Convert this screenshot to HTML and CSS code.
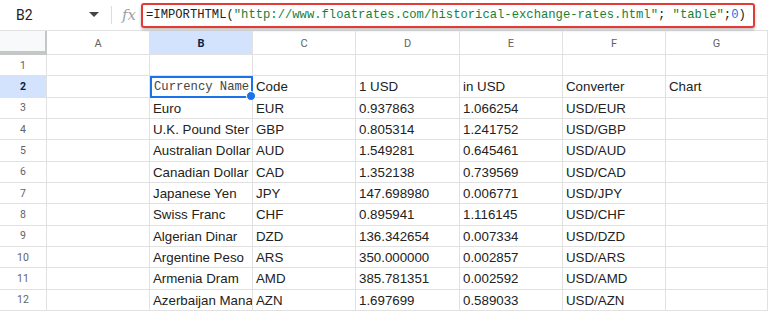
FILE: index.html
```html
<!DOCTYPE html>
<html>
<head>
    <title>IMPORTHTML sheet</title>
    <meta charset="utf-8" />
    <link rel="stylesheet" href="styles.css">
</head>
<body>
    <!-- FORMULA BAR -->
    <div class="toolbar">
        <div class="namebox">B2</div>
        <svg class="caret" width="10" height="6" viewBox="0 0 10 6"><path d="M0 0 L10 0 L5 5 Z" fill="#444"/></svg>
        <div class="divider"></div>
        <div class="fx">fx</div>
        <div class="formula"><span>=IMPORTHTML(</span><span class="str">"http://www.floatrates.com/historical-exchange-rates.html"</span><span>; </span><span class="str">"table"</span><span>;</span><span class="num">0</span><span>)</span></div>
    </div>

    <!-- GRID -->
    <div class="sheet">
        <div class="hd corner"></div>
        <div class="hd">A</div>
        <div class="hd sel">B</div>
        <div class="hd">C</div>
        <div class="hd">D</div>
        <div class="hd">E</div>
        <div class="hd">F</div>
        <div class="hd">G</div>

        <div class="rn">1</div>
        <div class="c"></div><div class="c"></div><div class="c"></div><div class="c"></div><div class="c"></div><div class="c"></div><div class="c"></div>

        <div class="rn sel">2</div>
        <div class="c"></div>
        <div class="c active">Currency Name<span class="handle"></span></div>
        <div class="c">Code</div><div class="c">1 USD</div><div class="c">in USD</div><div class="c">Converter</div><div class="c">Chart</div>

        <div class="rn">3</div>
        <div class="c"></div><div class="c">Euro</div><div class="c">EUR</div><div class="c">0.937863</div><div class="c">1.066254</div><div class="c">USD/EUR</div><div class="c"></div>

        <div class="rn">4</div>
        <div class="c"></div><div class="c">U.K. Pound Ster</div><div class="c">GBP</div><div class="c">0.805314</div><div class="c">1.241752</div><div class="c">USD/GBP</div><div class="c"></div>

        <div class="rn">5</div>
        <div class="c"></div><div class="c">Australian Dollar</div><div class="c">AUD</div><div class="c">1.549281</div><div class="c">0.645461</div><div class="c">USD/AUD</div><div class="c"></div>

        <div class="rn">6</div>
        <div class="c"></div><div class="c">Canadian Dollar</div><div class="c">CAD</div><div class="c">1.352138</div><div class="c">0.739569</div><div class="c">USD/CAD</div><div class="c"></div>

        <div class="rn">7</div>
        <div class="c"></div><div class="c">Japanese Yen</div><div class="c">JPY</div><div class="c">147.698980</div><div class="c">0.006771</div><div class="c">USD/JPY</div><div class="c"></div>

        <div class="rn">8</div>
        <div class="c"></div><div class="c">Swiss Franc</div><div class="c">CHF</div><div class="c">0.895941</div><div class="c">1.116145</div><div class="c">USD/CHF</div><div class="c"></div>

        <div class="rn">9</div>
        <div class="c"></div><div class="c">Algerian Dinar</div><div class="c">DZD</div><div class="c">136.342654</div><div class="c">0.007334</div><div class="c">USD/DZD</div><div class="c"></div>

        <div class="rn">10</div>
        <div class="c"></div><div class="c">Argentine Peso</div><div class="c">ARS</div><div class="c">350.000000</div><div class="c">0.002857</div><div class="c">USD/ARS</div><div class="c"></div>

        <div class="rn">11</div>
        <div class="c"></div><div class="c">Armenia Dram</div><div class="c">AMD</div><div class="c">385.781351</div><div class="c">0.002592</div><div class="c">USD/AMD</div><div class="c"></div>

        <div class="rn">12</div>
        <div class="c"></div><div class="c">Azerbaijan Mana</div><div class="c">AZN</div><div class="c">1.697699</div><div class="c">0.589033</div><div class="c">USD/AZN</div><div class="c"></div>
    </div>
</body>
</html>
```

FILE: styles.css
```css
html, body {
    margin:0;
    padding:0;
    background:#fff;
    font-family:"Liberation Sans", Arial, sans-serif;
    overflow:hidden;
}

/*** formula bar ***/
.toolbar {
    display:flex;
    align-items:center;
    height:30px;
    border-bottom:1px solid #e1e1e1;
}
.namebox {
    width:68px;
    padding-left:16px;
    font-family:Roboto, "Liberation Sans", sans-serif;
    font-size:14px;
    color:#202124;
}
.caret { margin-left:5px; }
.divider {
    width:1px;
    height:18px;
    margin-left:12px;
    background:#dadce0;
}
.fx {
    width:19px;
    margin-left:10px;
    font-family:"DejaVu Serif", serif;
    font-style:italic;
    font-size:15px;
    color:#9aa0a6;
}
.formula {
    height:21px;
    width:607px;
    padding-left:3px;
    display:flex;
    align-items:center;
    border:2px solid #e53935;
    border-radius:3px;
    box-shadow:0 2px 3px rgba(0,0,0,0.25);
    font-family:"Liberation Mono", "DejaVu Sans Mono", monospace;
    font-size:12.2px;
    color:#222;
    white-space:pre;
}
.formula .str { color:#188038; }
.formula .num { color:#1a73e8; }

/*** sheet grid ***/
.sheet {
    display:grid;
    grid-template-columns:47px 103px 103px 103px 104px 103px 103px 1fr;
    grid-template-rows:24px;
    grid-auto-rows:21.33px;
}
.sheet > div {
    box-sizing:border-box;
    border-right:1px solid #e1e1e1;
    border-bottom:1px solid #e1e1e1;
    white-space:nowrap;
    overflow:hidden;
}
.hd {
    display:flex;
    align-items:center;
    justify-content:center;
    padding-top:2px;
    font-family:Roboto, "Liberation Sans", sans-serif;
    font-size:11px;
    color:#5f6368;
}
.sheet .corner {
    background:#f8f9fa;
    border-right:2px solid #c4c7c5;
    border-bottom:4px solid #c4c7c5;
}
.rn {
    display:flex;
    align-items:center;
    justify-content:center;
    font-family:Roboto, "Liberation Sans", sans-serif;
    font-size:10.5px;
    color:#5f6368;
}
.sheet .sel {
    background:#d3e3fd;
    color:#0b1f44;
    font-weight:bold;
}
.c {
    display:flex;
    align-items:center;
    padding-left:3px;
    padding-top:1px;
    font-size:13.3px;
    color:#222;
}

/*** active cell ***/
.sheet .active {
    position:relative;
    overflow:visible;
    border:2px solid #1a73e8;
    padding-left:2px;
    font-family:"Liberation Mono", "DejaVu Sans Mono", monospace;
    font-size:12.2px;
    color:#444;
}
.handle {
    position:absolute;
    right:-5px;
    bottom:-5px;
    width:8px;
    height:8px;
    border-radius:50%;
    background:#1a73e8;
    border:1px solid #fff;
}
```
